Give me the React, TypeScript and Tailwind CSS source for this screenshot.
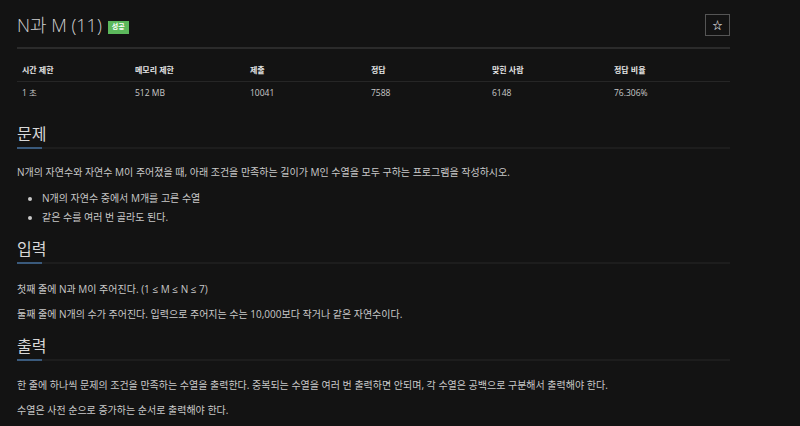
import React from "react"

const stats = [
  { label: "시간 제한", value: "1 초" },
  { label: "메모리 제한", value: "512 MB" },
  { label: "제출", value: "10041" },
  { label: "정답", value: "7588" },
  { label: "맞힌 사람", value: "6148" },
  { label: "정답 비율", value: "76.306%" },
]

function SectionTitle({ children, className = "" }: { children: React.ReactNode; className?: string }) {
  return (
    <div className={className}>
      <h2 className="text-[16px] leading-[20px] text-[#d8d8d8] font-normal">{children}</h2>
      <div className="mt-[3px] flex h-[2px]">
        <div className="w-[25px] bg-[#3a5a7c]" />
        <div className="flex-1 bg-[#1d1d1d]" />
      </div>
    </div>
  )
}

export default function App() {
  return (
    <div
      className="w-[800px] h-[426px] overflow-hidden bg-[#131313] text-[#c9c9c9]"
      style={{ fontFamily: '"Open Sans", "Noto Sans CJK KR", sans-serif' }}
    >
      <div className="w-[713px] ml-[17px]">
        {/* title */}
        <div className="flex items-center justify-between pt-[14px]">
          <div className="flex items-center gap-[6px]">
            <h1 className="text-[18px] leading-[22px] font-light text-[#d0d0d0]">N과 M (11)</h1>
            <span className="mt-[4px] flex h-[13px] items-center bg-[#5cb85c] px-[4px] text-[7px] font-bold text-white">
              성공
            </span>
          </div>
          <button className="flex h-[22px] w-[25px] items-center justify-center border border-[#555] text-[10px] leading-none text-white">
            ☆
          </button>
        </div>
        <div className="mt-[11px] h-[2px] bg-[#2b2b2b]" />

        {/* stats table */}
        <div className="mt-[10px] grid grid-cols-[113px_115px_121px_121px_122px_1fr]">
          {stats.map((s) => (
            <div key={s.label} className="border-b border-[#262626] pl-[5px] py-[5px] text-[8px] leading-[12px] font-bold text-[#e4e4e4]">
              {s.label}
            </div>
          ))}
          {stats.map((s) => (
            <div key={s.value} className="pl-[5px] pt-[5px] pb-[4px] text-[8.5px] leading-[12px] text-[#c9c9c9]">
              {s.value}
            </div>
          ))}
        </div>

        {/* 문제 */}
        <SectionTitle className="mt-[21px]">문제</SectionTitle>
        <p className="mt-[15px] text-[10px] leading-[16px]">
          N개의 자연수와 자연수 M이 주어졌을 때, 아래 조건을 만족하는 길이가 M인 수열을 모두 구하는 프로그램을 작성하시오.
        </p>
        <ul className="mt-[9px] pl-[25px] text-[10px] leading-[19px] list-disc">
          <li>N개의 자연수 중에서 M개를 고른 수열</li>
          <li>같은 수를 여러 번 골라도 된다.</li>
        </ul>

        {/* 입력 */}
        <SectionTitle className="mt-[12px]">입력</SectionTitle>
        <p className="mt-[17px] text-[10px] leading-[16px]">첫째 줄에 N과 M이 주어진다. (1 ≤ M ≤ N ≤ 7)</p>
        <p className="mt-[9px] text-[10px] leading-[16px]">
          둘째 줄에 N개의 수가 주어진다. 입력으로 주어지는 수는 10,000보다 작거나 같은 자연수이다.
        </p>

        {/* 출력 */}
        <SectionTitle className="mt-[14px]">출력</SectionTitle>
        <p className="mt-[16px] text-[10px] leading-[16px]">
          한 줄에 하나씩 문제의 조건을 만족하는 수열을 출력한다. 중복되는 수열을 여러 번 출력하면 안되며, 각 수열은 공백으로 구분해서 출력해야 한다.
        </p>
        <p className="mt-[9px] text-[10px] leading-[16px]">수열은 사전 순으로 증가하는 순서로 출력해야 한다.</p>
      </div>
    </div>
  )
}
